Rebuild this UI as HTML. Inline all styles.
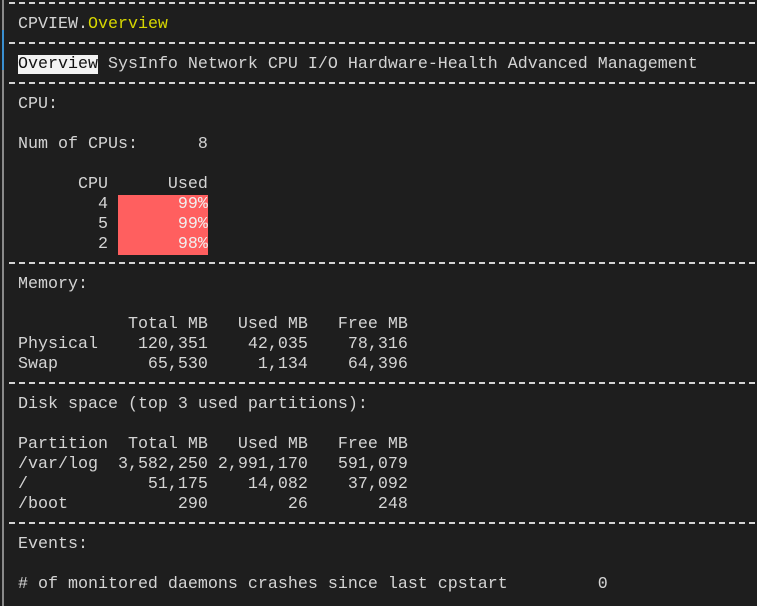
<!DOCTYPE html>
<html><head><meta charset="utf-8"><style>
html,body{margin:0;padding:0;background:#1e1e1e;width:757px;height:606px;overflow:hidden;position:relative}
pre{position:absolute;left:8px;top:15px;margin:0;font-family:"Liberation Mono",monospace;font-size:16.67px;line-height:20px;color:#d4d4d4;white-space:pre}
.y{color:#d7d700}
.h{background:#f2f2f2;color:#111}
.r{background:#ff5f5f;color:#f0f0f0;display:inline-block;height:20px;vertical-align:top}
.bar{position:absolute;left:2px;top:0;width:2px;height:606px;background:#8a8a8a}
.bl{position:absolute;left:2px;top:30px;width:2px;height:40px;background:#3a8fd0}
.d{position:absolute;left:9px;width:748px;height:2px;background:repeating-linear-gradient(90deg,#d4d4d4 0 6px,transparent 6px 10px)}
</style></head><body>
<div class="bar"></div><div class="bl"></div>
<div class="d" style="top:2px"></div>
<div class="d" style="top:42px"></div>
<div class="d" style="top:82px"></div>
<div class="d" style="top:262px"></div>
<div class="d" style="top:382px"></div>
<div class="d" style="top:522px"></div>
<pre> CPVIEW.<span class="y">Overview</span>

 <span class="h">Overview</span> SysInfo Network CPU I/O Hardware-Health Advanced Management

 CPU:

 Num of CPUs:      8

       CPU      Used
         4 <span class="r">      99%</span>
         5 <span class="r">      99%</span>
         2 <span class="r">      98%</span>

 Memory:

            Total MB   Used MB   Free MB
 Physical    120,351    42,035    78,316
 Swap         65,530     1,134    64,396

 Disk space (top 3 used partitions):

 Partition  Total MB   Used MB   Free MB
 /var/log  3,582,250 2,991,170   591,079
 /            51,175    14,082    37,092
 /boot           290        26       248

 Events:

 # of monitored daemons crashes since last cpstart         0
</pre>
</body></html>
